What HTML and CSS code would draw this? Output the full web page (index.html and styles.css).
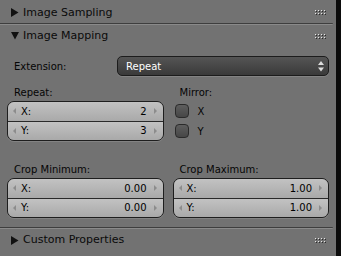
FILE: index.html
```html
<!DOCTYPE html>
<html>
<head>
<meta charset="utf-8">
<link rel="stylesheet" href="styles.css">
</head>
<body>
<div class="app">
  <div class="main">
    <div class="header first">
      <svg class="tri" width="8" height="9" viewBox="0 0 8 9"><polygon points="0,0 7.5,4.5 0,9" fill="#111"/></svg>
      <span class="title">Image Sampling</span>
      <svg class="grip" width="11" height="6" viewBox="0 0 11 6"><g fill="#e6e6e6"><rect x="0" y="0" width="1" height="1"/><rect x="3" y="0" width="1" height="1"/><rect x="6" y="0" width="1" height="1"/><rect x="9" y="0" width="1" height="1"/><rect x="0" y="3" width="1" height="1"/><rect x="3" y="3" width="1" height="1"/><rect x="6" y="3" width="1" height="1"/><rect x="9" y="3" width="1" height="1"/></g><g fill="#2a2a2a"><rect x="1" y="1" width="1" height="1"/><rect x="4" y="1" width="1" height="1"/><rect x="7" y="1" width="1" height="1"/><rect x="10" y="1" width="1" height="1"/><rect x="1" y="4" width="1" height="1"/><rect x="4" y="4" width="1" height="1"/><rect x="7" y="4" width="1" height="1"/><rect x="10" y="4" width="1" height="1"/></g></svg>
    </div>
    <div class="sep"></div>
    <div class="header">
      <svg class="tri" width="8" height="8" viewBox="0 0 8 8"><polygon points="0,0 8,0 4,7.5" fill="#111"/></svg>
      <span class="title">Image Mapping</span>
      <svg class="grip" width="11" height="6" viewBox="0 0 11 6"><g fill="#e6e6e6"><rect x="0" y="0" width="1" height="1"/><rect x="3" y="0" width="1" height="1"/><rect x="6" y="0" width="1" height="1"/><rect x="9" y="0" width="1" height="1"/><rect x="0" y="3" width="1" height="1"/><rect x="3" y="3" width="1" height="1"/><rect x="6" y="3" width="1" height="1"/><rect x="9" y="3" width="1" height="1"/></g><g fill="#2a2a2a"><rect x="1" y="1" width="1" height="1"/><rect x="4" y="1" width="1" height="1"/><rect x="7" y="1" width="1" height="1"/><rect x="10" y="1" width="1" height="1"/><rect x="1" y="4" width="1" height="1"/><rect x="4" y="4" width="1" height="1"/><rect x="7" y="4" width="1" height="1"/><rect x="10" y="4" width="1" height="1"/></g></svg>
    </div>
    <div class="content">
      <div class="ext-row">
        <span class="label ext-label">Extension:</span>
        <div class="dropdown">
          <span class="dd-text">Repeat</span>
          <svg class="updown" width="6" height="11" viewBox="0 0 6 11"><polygon points="3,0 6,4 0,4" fill="#dcdcdc"/><polygon points="0,6.5 6,6.5 3,10.5" fill="#dcdcdc"/></svg>
        </div>
      </div>

      <div class="cols">
        <div class="col">
          <div class="label lrow">Repeat:</div>
          <div class="numfield">
            <div class="numrow">
              <svg class="arr" width="4" height="6" viewBox="0 0 4 6"><polygon points="3,0 3,6 0,3" fill="#8c8c8c"/></svg>
              <span class="k">X:</span><span class="v">2</span>
              <svg class="arr" width="4" height="6" viewBox="0 0 4 6"><polygon points="1,0 1,6 4,3" fill="#8c8c8c"/></svg>
            </div>
            <div class="numrow">
              <svg class="arr" width="4" height="6" viewBox="0 0 4 6"><polygon points="3,0 3,6 0,3" fill="#8c8c8c"/></svg>
              <span class="k">Y:</span><span class="v">3</span>
              <svg class="arr" width="4" height="6" viewBox="0 0 4 6"><polygon points="1,0 1,6 4,3" fill="#8c8c8c"/></svg>
            </div>
          </div>
        </div>
        <div class="col">
          <div class="label lrow">Mirror:</div>
          <div class="checks">
            <div class="check"><span class="box"></span><span class="label">X</span></div>
            <div class="check"><span class="box"></span><span class="label">Y</span></div>
          </div>
        </div>
      </div>

      <div class="cols crop">
        <div class="col">
          <div class="label lrow">Crop Minimum:</div>
          <div class="numfield">
            <div class="numrow">
              <svg class="arr" width="4" height="6" viewBox="0 0 4 6"><polygon points="3,0 3,6 0,3" fill="#8c8c8c"/></svg>
              <span class="k">X:</span><span class="v">0.00</span>
              <svg class="arr" width="4" height="6" viewBox="0 0 4 6"><polygon points="1,0 1,6 4,3" fill="#8c8c8c"/></svg>
            </div>
            <div class="numrow">
              <svg class="arr" width="4" height="6" viewBox="0 0 4 6"><polygon points="3,0 3,6 0,3" fill="#8c8c8c"/></svg>
              <span class="k">Y:</span><span class="v">0.00</span>
              <svg class="arr" width="4" height="6" viewBox="0 0 4 6"><polygon points="1,0 1,6 4,3" fill="#8c8c8c"/></svg>
            </div>
          </div>
        </div>
        <div class="col">
          <div class="label lrow">Crop Maximum:</div>
          <div class="numfield">
            <div class="numrow">
              <svg class="arr" width="4" height="6" viewBox="0 0 4 6"><polygon points="3,0 3,6 0,3" fill="#8c8c8c"/></svg>
              <span class="k">X:</span><span class="v">1.00</span>
              <svg class="arr" width="4" height="6" viewBox="0 0 4 6"><polygon points="1,0 1,6 4,3" fill="#8c8c8c"/></svg>
            </div>
            <div class="numrow">
              <svg class="arr" width="4" height="6" viewBox="0 0 4 6"><polygon points="3,0 3,6 0,3" fill="#8c8c8c"/></svg>
              <span class="k">Y:</span><span class="v">1.00</span>
              <svg class="arr" width="4" height="6" viewBox="0 0 4 6"><polygon points="1,0 1,6 4,3" fill="#8c8c8c"/></svg>
            </div>
          </div>
        </div>
      </div>
    </div>
    <div class="sep"></div>
    <div class="header">
      <svg class="tri" width="8" height="9" viewBox="0 0 8 9"><polygon points="0,0 7.5,4.5 0,9" fill="#111"/></svg>
      <span class="title">Custom Properties</span>
      <svg class="grip" width="11" height="6" viewBox="0 0 11 6"><g fill="#e6e6e6"><rect x="0" y="0" width="1" height="1"/><rect x="3" y="0" width="1" height="1"/><rect x="6" y="0" width="1" height="1"/><rect x="9" y="0" width="1" height="1"/><rect x="0" y="3" width="1" height="1"/><rect x="3" y="3" width="1" height="1"/><rect x="6" y="3" width="1" height="1"/><rect x="9" y="3" width="1" height="1"/></g><g fill="#2a2a2a"><rect x="1" y="1" width="1" height="1"/><rect x="4" y="1" width="1" height="1"/><rect x="7" y="1" width="1" height="1"/><rect x="10" y="1" width="1" height="1"/><rect x="1" y="4" width="1" height="1"/><rect x="4" y="4" width="1" height="1"/><rect x="7" y="4" width="1" height="1"/><rect x="10" y="4" width="1" height="1"/></g></svg>
    </div>
  </div>
  <div class="strip"></div>
</div>
</body>
</html>
```

FILE: styles.css
```css
html, body {
  margin: 0;
  padding: 0;
  width: 341px;
  height: 256px;
  overflow: hidden;
  background: #727272;
  font-family: "DejaVu Sans", "Liberation Sans", sans-serif;
  color: #000;
}

.app {
  display: flex;
  width: 341px;
  height: 256px;
}

.main {
  width: 336px;
  flex: none;
  display: flex;
  flex-direction: column;
}

.strip {
  flex: 1;
  background: #0c0c0c;
}

.header {
  height: 22px;
  display: flex;
  align-items: center;
  padding-left: 11px;
  padding-right: 10px;
  flex: none;
}

.header.first {
  height: 21px;
  padding-top: 2px;
}

.tri {
  flex: none;
  display: block;
}

.title {
  margin-left: 4px;
  font-size: 11px;
  line-height: 22px;
  color: #0a0a0a;
  flex: 1;
}

.header.first .title {
  line-height: 21px;
}

.grip {
  display: block;
  flex: none;
  margin-top: 1px;
}

.sep {
  width: 333px;
  height: 1px;
  background: #3e3e3e;
  border-bottom: 1px solid #8a8a8a;
  border-radius: 0 2px 2px 0;
  flex: none;
}

.content {
  padding: 9px 7px 9px 7px;
  display: flex;
  flex-direction: column;
}

.label {
  font-size: 10px;
  color: #050505;
}

.ext-row {
  display: flex;
  align-items: center;
  height: 20px;
}

.ext-label {
  width: 103px;
  padding-left: 7px;
  flex: none;
}

.dropdown {
  flex: 1;
  box-sizing: border-box;
  height: 20px;
  border: 1px solid #1c1c1c;
  border-radius: 5px;
  background: linear-gradient(#555555, #3a3a3a);
  box-shadow: 0 1px 0 rgba(255,255,255,0.12);
  display: flex;
  align-items: center;
  padding-left: 8px;
  padding-right: 4px;
}

.dd-text {
  flex: 1;
  color: #fff;
  font-size: 10px;
}

.updown {
  display: block;
}

.cols {
  display: grid;
  grid-template-columns: 1fr 1fr;
  column-gap: 9px;
  margin-top: 9px;
}

.cols.crop {
  margin-top: 21px;
}

.lrow {
  height: 16px;
  line-height: 16px;
  padding-left: 7px;
}

.numfield {
  box-sizing: border-box;
  height: 40px;
  border: 1px solid #1e1e1e;
  border-radius: 7px;
  overflow: hidden;
  display: flex;
  flex-direction: column;
  box-shadow: 0 1px 0 rgba(255,255,255,0.12);
}

.numrow {
  flex: 1;
  display: flex;
  align-items: center;
  padding: 0 6px 0 5px;
  background: linear-gradient(#c2c2c2, #a9a9a9);
  font-size: 10px;
}

.numrow + .numrow {
  border-top: 1px solid #2a2a2a;
}

.arr {
  display: block;
  flex: none;
}

.k {
  margin-left: 4px;
  flex: 1;
}

.v {
  margin-right: 6px;
}

.checks {
  box-sizing: border-box;
  height: 40px;
  display: flex;
  flex-direction: column;
  padding-top: 3px;
  padding-left: 2px;
}

.check {
  height: 20px;
  flex: none;
  display: flex;
  align-items: flex-start;
}

.box {
  box-sizing: border-box;
  width: 14px;
  height: 14px;
  border: 1px solid #2a2a2a;
  border-radius: 4px;
  background: linear-gradient(#5e5e5e, #464646);
  flex: none;
}

.check .label {
  margin-left: 9px;
  line-height: 15px;
}
```
